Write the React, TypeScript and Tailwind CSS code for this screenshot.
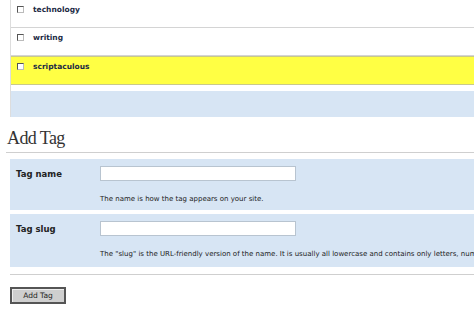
const tags = [
  { name: "technology", active: false },
  { name: "writing", active: false },
  { name: "scriptaculous", active: true },
]

function Checkbox() {
  return <span className="block h-[7px] w-[7px] border border-[#555] border-r-[#bbb] border-b-[#bbb] bg-white" />
}

export default function App() {
  return (
    <div className="h-[314px] w-[474px] overflow-hidden bg-white font-['DejaVu_Sans',sans-serif]">
      {/* tag list */}
      <div className="ml-[10px] border-l border-[#ddd]">
        {tags.map((tag) => (
          <div
            key={tag.name}
            className={
              tag.active
                ? "flex h-[29px] items-start gap-[9px] border-y border-[#c9c98a] bg-[#ffff44] pl-[6px] pt-[6px]"
                : "flex h-[28px] items-start gap-[9px] border-b border-[#d4d4d4] pl-[6px] pt-[6px]"
            }
          >
            <Checkbox />
            <span className="text-[7.5px] font-bold leading-[8px] text-[#1c2a44]">{tag.name}</span>
          </div>
        ))}
        <div className="mt-[6px] h-[26px] bg-[#d7e5f4]" />
      </div>

      {/* Add Tag */}
      <h2 className="mt-[10px] ml-[7px] font-['Liberation_Serif',serif] text-[18px] leading-[22px] tracking-[-0.6px] text-[#333]">
        Add Tag
      </h2>
      <div className="mt-[3px] ml-[6px] h-px bg-[#cfcfcf]" />

      <div className="mt-[6px] ml-[10px] flex flex-col gap-[4px]">
        <div className="flex h-[51px] bg-[#d7e5f4] pt-[7px]">
          <div className="w-[90px] shrink-0 pl-[6px] pt-[3px] text-[8.5px] font-bold leading-[10px] text-[#222]">Tag name</div>
          <div className="flex min-w-0 flex-col">
            <div className="h-[15px] w-[196px] border border-[#b8c4d0] bg-white" />
            <p className="mt-[14px] whitespace-nowrap text-[7px] leading-[8px] text-[#222]">
              The name is how the tag appears on your site.
            </p>
          </div>
        </div>
        <div className="flex h-[53px] bg-[#d7e5f4] pt-[7px]">
          <div className="w-[90px] shrink-0 pl-[6px] pt-[3px] text-[8.5px] font-bold leading-[10px] text-[#222]">Tag slug</div>
          <div className="flex min-w-0 flex-col">
            <div className="h-[15px] w-[196px] border border-[#b8c4d0] bg-white" />
            <p className="mt-[14px] whitespace-nowrap text-[7px] leading-[8px] text-[#222]">
              The &quot;slug&quot; is the URL-friendly version of the name. It is usually all lowercase and contains only letters, numbers, and hyphens.
            </p>
          </div>
        </div>
      </div>
      <div className="mt-[7px] ml-[10px] h-px bg-[#cfcfcf]" />

      <button className="mt-[12px] ml-[10px] flex h-[17px] w-[56px] items-center justify-center border-2 border-[#555] bg-[#cfcfcf] text-[7.5px] text-[#222] shadow-[inset_1px_1px_0_#eee]">
        Add Tag
      </button>
    </div>
  )
}
